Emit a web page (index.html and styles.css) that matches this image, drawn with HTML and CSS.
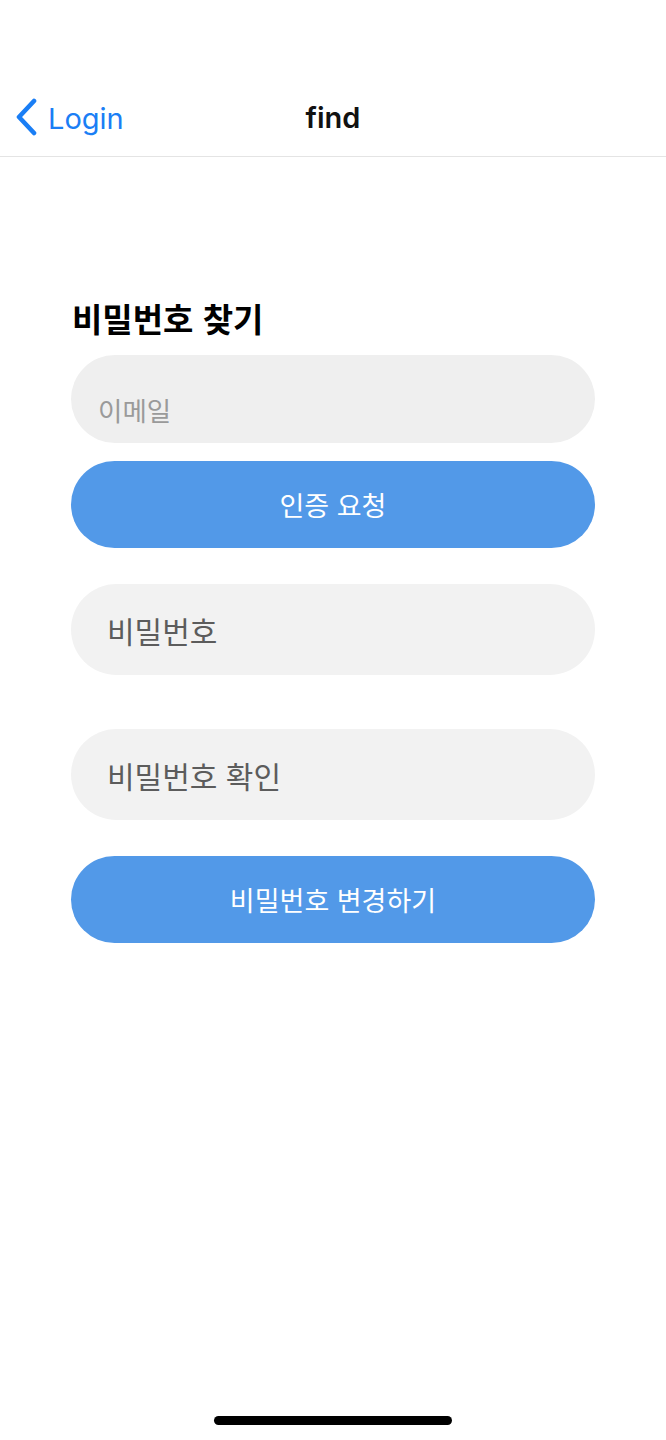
FILE: index.html
```html
<!DOCTYPE html>
<html lang="ko">
<head>
<meta charset="utf-8">
<title>find</title>
<link rel="stylesheet" href="styles.css">
</head>
<body>
<div class="page">
  <header class="header">
    <nav class="nav">
      <a class="back">
        <svg class="chev" width="24" height="38" viewBox="0 0 24 38"><path d="M20 3 L5 19 L20 35" fill="none" stroke="#1a7ef5" stroke-width="4.6" stroke-linecap="round" stroke-linejoin="round"/></svg>
        <span class="back-label">Login</span>
      </a>
      <div class="title">find</div>
    </nav>
  </header>
  <main class="content">
    <h1 class="heading">비밀번호 찾기</h1>
    <div class="field field-email"><span class="ph ph-email">이메일</span></div>
    <button class="btn btn-req">인증 요청</button>
    <div class="field field-pw"><span class="ph ph-pw">비밀번호</span></div>
    <div class="field field-pw field-confirm"><span class="ph ph-pw">비밀번호 확인</span></div>
    <button class="btn btn-change">비밀번호 변경하기</button>
  </main>
  <div class="home-indicator"></div>
</div>
</body>
</html>
```
FILE: styles.css
```css
* { box-sizing: border-box; }
html, body { margin: 0; padding: 0; background: #fff; }
body { font-family: "Noto Sans", "Noto Sans CJK KR", sans-serif; }
.page { width: 666px; height: 1440px; display: flex; flex-direction: column; }
.header { padding-top: 80px; border-bottom: 1px solid #e4e4e4; }
.nav { position: relative; height: 76px; display: flex; align-items: center; justify-content: center; }
.back { position: absolute; left: 14px; top: 0; height: 76px; display: flex; align-items: center; gap: 10px; color: #1a7ef5; }
.chev { display: block; margin-top: -2px; }
.back-label { font-family: "Inter", "Noto Sans", sans-serif; font-size: 29px; line-height: 1; color: #1a7ef5; }
.title { font-family: "Inter", "Noto Sans", sans-serif; font-weight: 600; font-size: 29px; color: #111; line-height: 1; margin-top: -2px; }
.content { padding: 0 71px; display: flex; flex-direction: column; }
.heading { margin: 141px 0 17px 1px; font-family: "Noto Sans CJK KR", sans-serif; font-weight: 700; font-size: 33px; line-height: 40px; color: #000; }
.field { width: 524px; border-radius: 46px; display: flex; align-items: center; }
.field-email { height: 88px; background: #efefef; padding: 22px 27px 0; }
.ph { font-family: "Noto Sans CJK KR", sans-serif; line-height: 1; }
.ph-email { font-size: 26.5px; color: #9a9a9a; }
.field-pw { height: 91px; background: #f2f2f2; padding: 0 36px; margin-top: 36px; }
.field-confirm { margin-top: 54px; }
.ph-pw { font-size: 30px; color: #5c5c5c; }
.btn { width: 524px; height: 87px; border: 0; border-radius: 44px; background: #5299e8; color: #fff; font-family: "Noto Sans CJK KR", sans-serif; font-size: 27px; padding: 0; display: flex; align-items: center; justify-content: center; }
.btn-req { margin-top: 18px; }
.btn-change { margin-top: 36px; }
.home-indicator { margin: auto auto 15px; width: 238px; height: 9px; border-radius: 5px; background: #000; }
```
